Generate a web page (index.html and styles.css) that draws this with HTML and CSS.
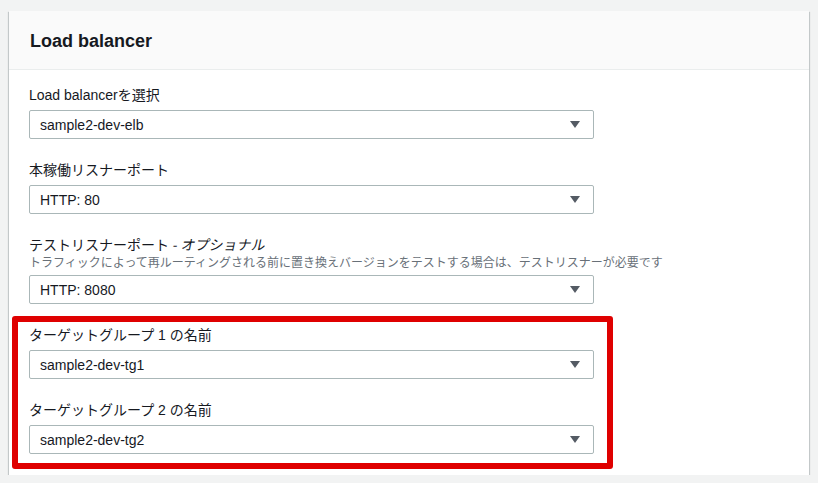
FILE: index.html
```html
<!DOCTYPE html>
<html lang="ja">
<head>
    <meta charset="UTF-8">
    <title>Load balancer</title>
    <link rel="stylesheet" href="styles.css">
</head>
<body>
    <div class="container">
        <div class="container-header">
            <h2 class="container-title">Load balancer</h2>
        </div>

        <div class="container-content">
            <div class="field">
                <label class="field-label">Load balancerを選択</label>
                <div class="select">
                    <span class="select-value">sample2-dev-elb</span>
                    <svg class="caret" width="10" height="7" viewBox="0 0 10 7"><polygon points="0,0 10,0 5,7"/></svg>
                </div>
            </div>

            <div class="field">
                <label class="field-label">本稼働リスナーポート</label>
                <div class="select">
                    <span class="select-value">HTTP: 80</span>
                    <svg class="caret" width="10" height="7" viewBox="0 0 10 7"><polygon points="0,0 10,0 5,7"/></svg>
                </div>
            </div>

            <div class="field">
                <label class="field-label">テストリスナーポート <i>- オプショナル</i></label>
                <div class="field-description">トラフィックによって再ルーティングされる前に置き換えバージョンをテストする場合は、テストリスナーが必要です</div>
                <div class="select">
                    <span class="select-value">HTTP: 8080</span>
                    <svg class="caret" width="10" height="7" viewBox="0 0 10 7"><polygon points="0,0 10,0 5,7"/></svg>
                </div>
            </div>

            <div class="highlight">
                <div class="field">
                    <label class="field-label">ターゲットグループ 1 の名前</label>
                    <div class="select">
                        <span class="select-value">sample2-dev-tg1</span>
                        <svg class="caret" width="10" height="7" viewBox="0 0 10 7"><polygon points="0,0 10,0 5,7"/></svg>
                    </div>
                </div>

                <div class="field">
                    <label class="field-label">ターゲットグループ 2 の名前</label>
                    <div class="select">
                        <span class="select-value">sample2-dev-tg2</span>
                        <svg class="caret" width="10" height="7" viewBox="0 0 10 7"><polygon points="0,0 10,0 5,7"/></svg>
                    </div>
                </div>
            </div>
        </div>
    </div>
</body>
</html>
```

FILE: styles.css
```css
* {
    margin: 0;
    padding: 0;
    box-sizing: border-box;
}

body {
    font-family: "Liberation Sans", "Noto Sans CJK JP", sans-serif;
    background: #f2f3f3;
    color: #16191f;
    padding: 11px 9px 0;
}

.container {
    width: 800px;
    background: #ffffff;
    box-shadow: 0 1px 1px 0 rgba(0, 28, 36, 0.3),
                1px 1px 1px 0 rgba(0, 28, 36, 0.15),
                -1px 1px 1px 0 rgba(0, 28, 36, 0.15);
}

.container-header {
    background: #fafafa;
    border-bottom: 1px solid #eaeded;
    height: 59px;
    display: flex;
    align-items: center;
    padding: 2px 20px 0 21px;
}

.container-title {
    font-size: 18px;
    font-weight: 700;
    line-height: 22px;
}

.container-content {
    padding: 14px 20px 21px;
    display: flex;
    flex-direction: column;
    gap: 20px;
}

.field {
    display: flex;
    flex-direction: column;
}

.field-label {
    font-size: 14px;
    line-height: 22px;
    margin-bottom: 4px;
}

/* CJK fonts have no italic, so slant it by hand */
.field-label i {
    display: inline-block;
    font-style: normal;
    transform: skewX(-12deg);
}

.field-description {
    font-size: 12px;
    line-height: 15px;
    color: #687078;
    margin-top: -4px;
    margin-bottom: 4px;
    white-space: nowrap;
}

.select {
    width: 565px;
    height: 29px;
    border: 1px solid #aab7b8;
    border-radius: 2px;
    display: flex;
    align-items: center;
    justify-content: space-between;
    padding: 0 13px 0 10px;
    font-size: 14px;
}

.caret {
    fill: #545b64;
}

/* annotation frame around the target group fields */
.highlight {
    position: relative;
    width: 565px;
    display: flex;
    flex-direction: column;
    gap: 20px;
}

.highlight::after {
    content: '';
    position: absolute;
    top: -8px;
    left: -17px;
    right: -19px;
    bottom: -15px;
    border: 6px solid #df0000;
    border-radius: 3px;
    pointer-events: none;
}
```
